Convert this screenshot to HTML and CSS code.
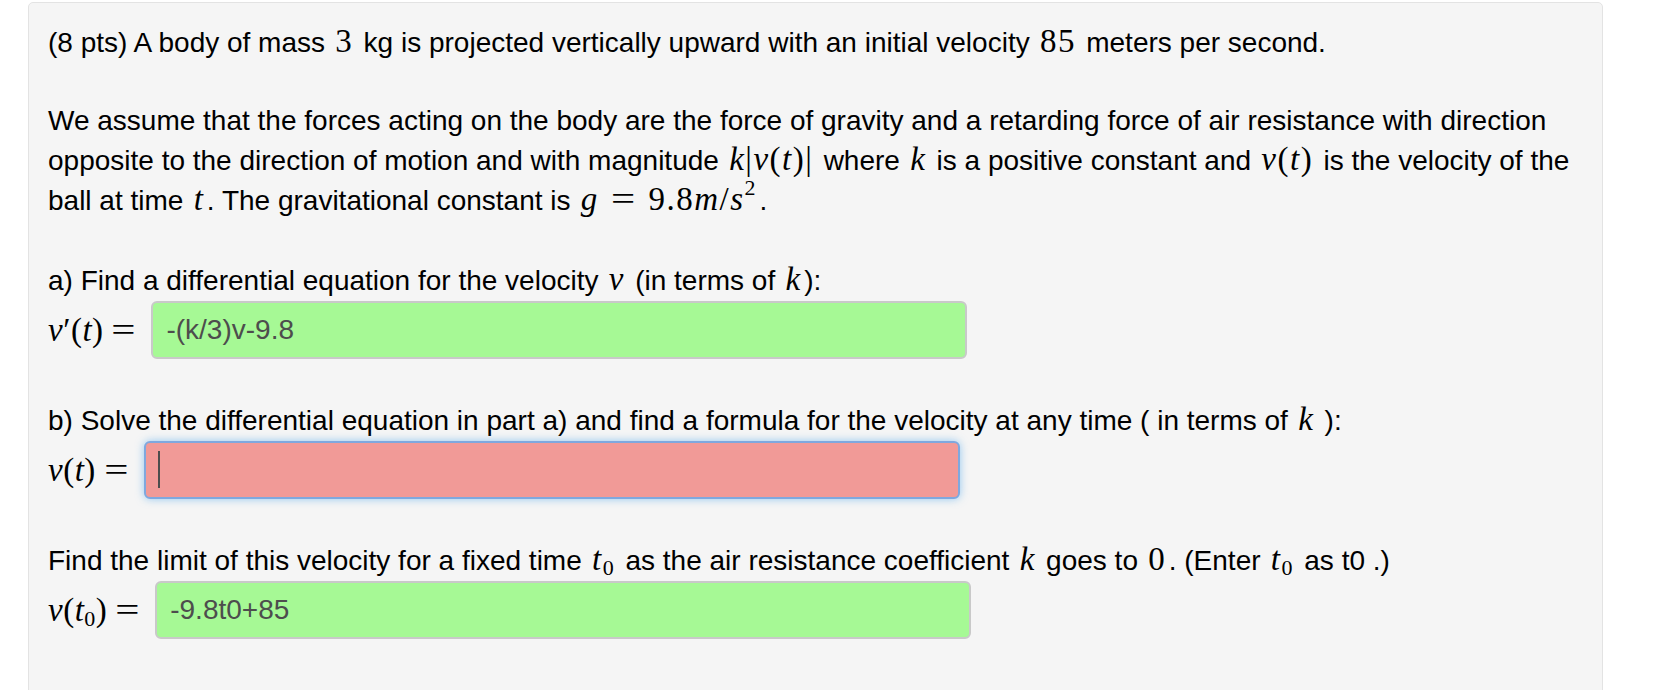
FILE: index.html
```html
<!DOCTYPE html>
<html lang="en">
<head>
    <meta charset="UTF-8">
    <meta name="viewport" content="width=device-width, initial-scale=1.0">
    <title>Problem</title>
    <link rel="stylesheet" href="styles.css">
</head>
<body>
    <div class="problem">
        <p class="text first">(8 pts) A body of mass <span class="m">3</span> kg is projected vertically upward with an initial velocity <span class="m">85</span> meters per second.</p>

        <p class="text">We assume that the forces acting on the body are the force of gravity and a retarding force of air resistance with direction<br>
        opposite to the direction of motion and with magnitude <span class="m"><i>k</i>|<i>v</i>(<i>t</i>)|</span> where <span class="m"><i>k</i></span> is a positive constant and <span class="m"><i>v</i>(<i>t</i>)</span> is the velocity of the<br>
        ball at time <span class="m"><i>t</i></span>. The gravitational constant is <span class="m"><i>g</i> <span class="eq">=</span> 9.8<i>m</i>/<i>s</i><sup>2</sup></span>.</p>

        <p class="text ask">a) Find a differential equation for the velocity <span class="m"><i>v</i></span> (in terms of <span class="m"><i>k</i></span>):</p>
        <div class="answer">
            <span class="m label"><i>v</i>′(<i>t</i>) <span class="eq">=</span></span>
            <div class="field">
                <input type="text" class="ansInput correct" value="-(k/3)v-9.8">
            </div>
        </div>

        <p class="text ask">b) Solve the differential equation in part a) and find a formula for the velocity at any time ( in terms of <span class="m"><i>k</i></span> ):</p>
        <div class="answer">
            <span class="m label"><i>v</i>(<i>t</i>) <span class="eq">=</span></span>
            <div class="field">
                <input type="text" class="ansInput incorrect focused" value="">
                <span class="caret"></span>
            </div>
        </div>

        <p class="text ask">Find the limit of this velocity for a fixed time <span class="m"><i>t</i><sub>0</sub></span> as the air resistance coefficient <span class="m"><i>k</i></span> goes to <span class="m">0</span>. (Enter <span class="m"><i>t</i><sub>0</sub></span> as t0 .)</p>
        <div class="answer">
            <span class="m label"><i>v</i>(<i>t</i><sub>0</sub>) <span class="eq">=</span></span>
            <div class="field">
                <input type="text" class="ansInput correct" value="-9.8t0+85">
            </div>
        </div>
    </div>
</body>
</html>
```

FILE: styles.css
```css
body {
    font-family: "Liberation Sans", Arial, sans-serif;
    background-color: #fff;
    color: #000;
    margin: 2px 73px 0 28px;
    padding: 0;
}

.problem {
    background-color: #f5f5f5;
    border: 1px solid #e3e3e3;
    border-radius: 5px;
    padding: 20px 8px 60px 19px;
    min-height: 700px;
}

.text {
    font-size: 28px;
    line-height: 40px;
    margin: 0 0 40px 0;
}

.text.first {
    margin-bottom: 38px;
}

.text.ask {
    margin-bottom: 0;
}

.m {
    font-family: "Liberation Serif", "Times New Roman", serif;
    font-size: 33px;
    letter-spacing: 1.5px;
    line-height: 0;
}

.text .m {
    margin: 0 2.5px;
}

.m sup {
    font-size: 22px;
    line-height: 0;
    vertical-align: 15px;
}

.m sub {
    font-size: 22px;
    line-height: 0;
    vertical-align: -5px;
    font-style: normal;
}

.eq {
    display: inline-block;
    transform: scaleX(1.3);
    margin: 0 5px;
}

.answer {
    display: flex;
    align-items: center;
    margin-bottom: 42px;
}

.label {
    line-height: 58px;
    white-space: nowrap;
    letter-spacing: 0.5px;
}

.label .eq {
    margin: 0 2px;
}

.field {
    position: relative;
    margin-left: 16px;
}

.ansInput {
    width: 816px;
    height: 58px;
    box-sizing: border-box;
    padding: 0 13px;
    border: 2px solid #c9c9c9;
    border-radius: 6px;
    font-family: "Liberation Sans", Arial, sans-serif;
    font-size: 28px;
    color: #4d4d4d;
    outline: none;
}

.correct {
    background-color: #a6f995;
}

.incorrect {
    background-color: #f19a97;
}

.focused {
    border-color: #7fa8de;
    box-shadow: 0 0 8px rgba(82, 168, 236, 0.6);
}

.caret {
    position: absolute;
    left: 14px;
    top: 10px;
    width: 2px;
    height: 37px;
    background-color: #4d4d4d;
}
```
